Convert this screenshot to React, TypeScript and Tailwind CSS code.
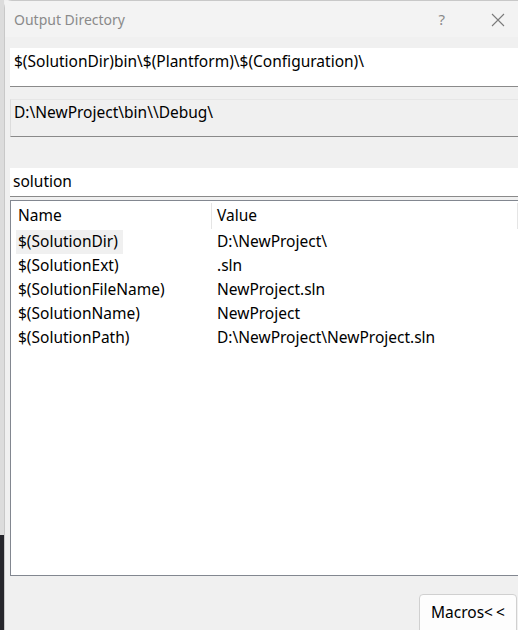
import React from "react";

const rows = [
  { name: "$(SolutionDir)", value: "D:\\NewProject\\" },
  { name: "$(SolutionExt)", value: ".sln" },
  { name: "$(SolutionFileName)", value: "NewProject.sln" },
  { name: "$(SolutionName)", value: "NewProject" },
  { name: "$(SolutionPath)", value: "D:\\NewProject\\NewProject.sln" },
];

const font = { fontFamily: '"Noto Sans", "Open Sans", sans-serif' };

export default function App() {
  return (
    <div className="flex h-[630px] w-[518px] overflow-hidden bg-[#f0f0f0] text-[15.5px] text-black" style={font}>
      {/* window behind the dialog */}
      <div className="flex w-[4px] shrink-0 flex-col">
        <div className="h-[535px] shrink-0 bg-[#dcdcdc]" />
        <div className="flex-1 bg-[#26262c]" />
      </div>

      <div className="flex flex-1 flex-col rounded-tl-lg border-l border-t border-[#c8c8c8] bg-[#f0f0f0]">
        {/* title bar */}
        <div className="flex h-[36px] shrink-0 items-center bg-[#f3f3f3] pl-[9px] pt-[1px]">
          <span className="text-[14px] text-[#8a8a8a]">Output Directory</span>
          <span className="ml-auto mr-[46px] text-[15px] text-[#8a8a8a]">?</span>
          <svg width="14" height="14" viewBox="0 0 14 14" className="mr-[13px]">
            <path d="M1 1 L13 13 M13 1 L1 13" stroke="#7a7a7a" strokeWidth="1.1" />
          </svg>
        </div>

        <div className="flex flex-col pl-[5px]">
          {/* edit box */}
          <div className="mt-[11px] h-[39px] shrink-0 border-b border-[#8a8a8a] bg-white pl-[4px] pt-[2px] leading-[22px]">
            $(SolutionDir)bin\$(Plantform)\$(Configuration)\
          </div>

          {/* evaluated value */}
          <div className="mt-[12px] h-[38px] shrink-0 border-b border-l border-t border-b-[#8a8a8a] border-l-[#dcdcdc] border-t-[#e6e6e6] bg-[#f0f0f0] pl-[3px] pt-[1px] leading-[22px]">
            D:\NewProject\bin\\Debug\
          </div>

          {/* filter */}
          <div className="mt-[31px] h-[29px] shrink-0 border-b border-[#8a8a8a] bg-white pl-[3px] pt-[2px] leading-[22px]">
            solution
          </div>

          {/* macro list */}
          <div className="mt-[3px] flex h-[376px] shrink-0 flex-col border border-r-0 border-[#828790] bg-white">
            <div className="flex h-[29px] shrink-0 items-center">
              <div className="flex h-[26px] w-[201px] items-center border-r border-[#e5e5e5] pl-[7px]">Name</div>
              <div className="flex h-[26px] flex-1 items-center border-r border-[#e5e5e5] pl-[5px]">Value</div>
            </div>
            {rows.map((r, i) => (
              <div key={r.name} className="flex h-[24px] shrink-0 items-center">
                <div className="flex w-[202px] pl-[5px]">
                  <span className={`flex h-[24px] items-center pl-[2px] pr-[5px] ${i === 0 ? "bg-[#f0f0f0]" : ""}`}>
                    {r.name}
                  </span>
                </div>
                <div className="pl-[4px]">{r.value}</div>
              </div>
            ))}
          </div>

          {/* footer */}
          <div className="mt-[18px] flex shrink-0 justify-end pr-[1px]">
            <button className="h-[40px] w-[98px] rounded-[4px] border border-[#d0d0d0] bg-[#fdfdfd] pb-[2px] pl-[11px] text-left text-[15.5px] text-black">
              Macros&lt;<span className="ml-[3px]">&lt;</span>
            </button>
          </div>
        </div>
      </div>
    </div>
  );
}
